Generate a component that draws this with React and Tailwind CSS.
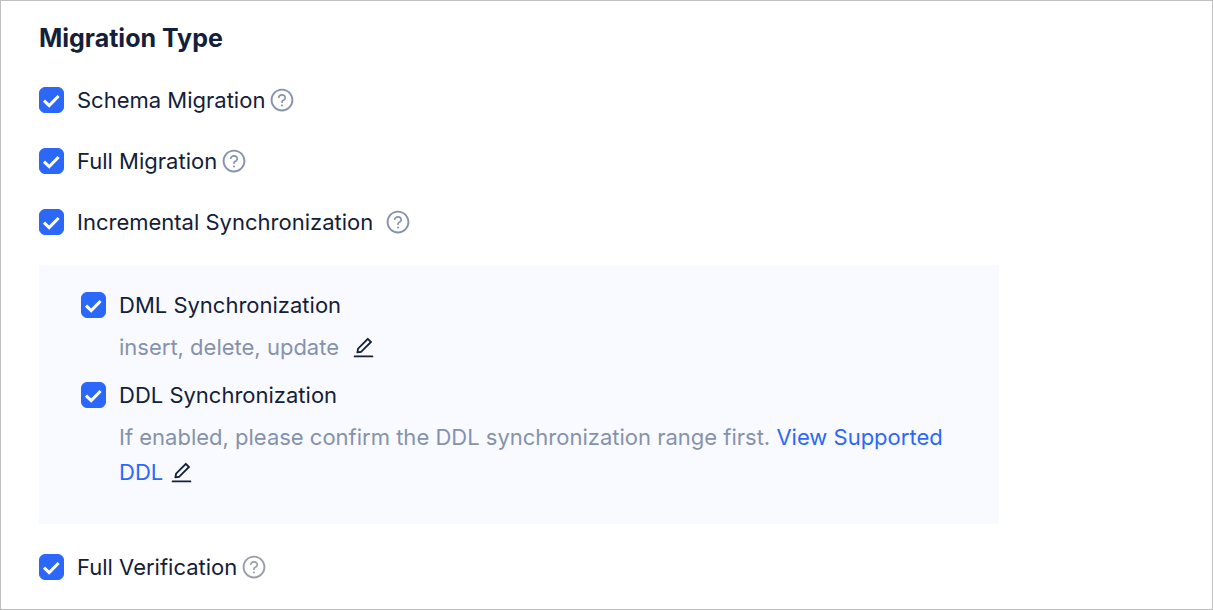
import { useState } from "react";
import { AiOutlineEdit, AiOutlineQuestionCircle } from "react-icons/ai";

function Checkbox({ id, label, defaultChecked = true }) {
  const [checked, setChecked] = useState(defaultChecked);

  return (
    <div className="flex items-center gap-[13px]">
      <span className="relative h-[26px] w-[25px] shrink-0">
        <input
          id={id}
          type="checkbox"
          checked={checked}
          onChange={(e) => setChecked(e.target.checked)}
          className="block h-[26px] w-[25px] appearance-none rounded-md border border-[#c0c6d4] bg-white checked:border-[#2b68fa] checked:bg-[#2b68fa]"
        />
        {checked && (
          <svg
            viewBox="0 0 25 26"
            fill="none"
            stroke="white"
            strokeWidth="3"
            className="pointer-events-none absolute inset-0"
            aria-hidden="true"
          >
            <path d="M5 13.6 L10.2 18.6 L19.6 9" />
          </svg>
        )}
      </span>
      <label htmlFor={id}>{label}</label>
    </div>
  );
}

function HelpButton({ label, className = "ml-1 text-[#8592ad]" }) {
  return (
    <button type="button" aria-label={label} className={className}>
      <AiOutlineQuestionCircle size={26} />
    </button>
  );
}

function EditButton({ label, className }) {
  return (
    <button type="button" aria-label={label} className={className}>
      <AiOutlineEdit size={25} />
    </button>
  );
}

export default function App() {
  return (
    <main className="min-h-screen border border-[#bfbfbf] bg-white px-[38px] pt-[19px] pb-6 font-['Inter',sans-serif] text-[22px] leading-9 text-[#132039]">
      <h1 className="text-[25px] leading-9 font-bold">Migration Type</h1>

      <div className="mt-[26px] flex flex-col gap-[25px]">
        <div className="flex items-center">
          <Checkbox id="schema" label="Schema Migration" />
          <HelpButton label="About schema migration" />
        </div>

        <div className="flex items-center">
          <Checkbox id="full" label="Full Migration" />
          <HelpButton label="About full migration" />
        </div>

        <div className="flex items-center">
          <Checkbox id="incremental" label="Incremental Synchronization" />
          <HelpButton
            label="About incremental synchronization"
            className="ml-3 text-[#8592ad]"
          />
        </div>

        <section className="max-w-[960px] bg-[#f9faff] pt-[22px] pr-10 pb-[34px] pl-[42px]">
          <Checkbox id="dml" label="DML Synchronization" />
          <div className="mt-1.5 flex items-center pl-[38px] text-[#8592ad]">
            <p>insert, delete, update</p>
            <EditButton label="Edit DML range" className="ml-3 text-[#132039]" />
          </div>

          <div className="mt-3">
            <Checkbox id="ddl" label="DDL Synchronization" />
          </div>
          <p className="mt-[7px] pl-[38px] leading-[35px] text-[#8592ad]">
            If enabled, please confirm the DDL synchronization range first.{" "}
            <a href="#ddl" className="text-[#2b68fa]">
              View Supported DDL
            </a>
            <EditButton
              label="Edit DDL range"
              className="ml-1.5 align-text-bottom text-[#132039]"
            />
          </p>
        </section>

        <div className="flex items-center">
          <Checkbox id="verification" label="Full Verification" />
          <HelpButton
            label="About full verification"
            className="ml-1 text-[#999da8]"
          />
        </div>
      </div>
    </main>
  );
}
